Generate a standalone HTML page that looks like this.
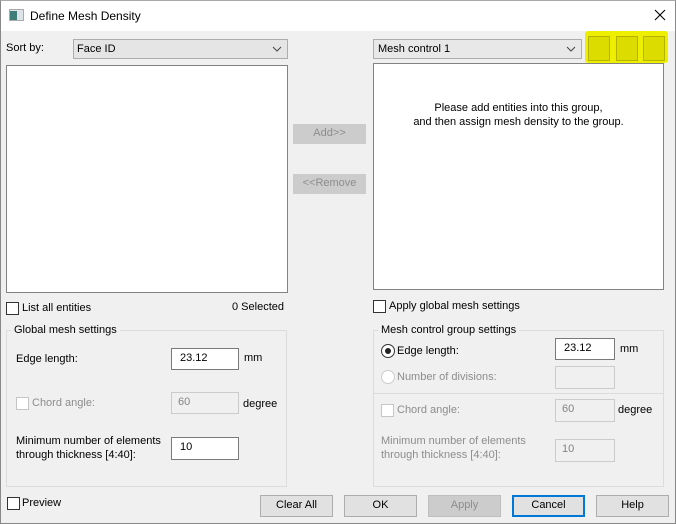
<!DOCTYPE html>
<html><head><meta charset="utf-8"><style>
*{box-sizing:border-box;margin:0;padding:0}
body{width:676px;height:524px;position:relative;background:#f0f0f0;font-family:"Liberation Sans",sans-serif;font-size:11px;color:#000;overflow:hidden}
.a{position:absolute}
.win{left:0;top:0;width:676px;height:524px;border:1px solid #888;border-top:1px solid #aaa}
.title{left:1px;top:1px;width:674px;height:30px;background:#fff}
.box{background:#fff;border:1px solid #828282}
.in{background:#fff;border:1px solid #7a7a7a;padding:3px 0 0 8px}
.dis{background:#f0f0f0;border:1px solid #cccccc;color:#838383;padding:3px 0 0 6px}
.cb{width:13px;height:13px;border:1px solid #333;background:#fff}
.cbd{width:13px;height:13px;border:1px solid #c6c6c6;background:#fff}
.btn{background:#e1e1e1;border:1px solid #adadad;text-align:center;line-height:19px}
.btnd{background:#cccccc;color:#8d8d8d;text-align:center;line-height:19px}
.grp{border:1px solid #dcdcdc}
.lbl{background:#f0f0f0;padding:0 3px}
.g{color:#8d8d8d}
.ys{width:22px;height:25px;background:#dcdc00;border:1px solid #b4b400}
</style></head><body>
<div class="a win"></div>
<div class="a title"></div>
<div class="a" style="left:9px;top:9px;width:15px;height:12px;background:#dde3e6;border:1px solid #aaa"></div>
<div class="a" style="left:10px;top:11px;width:7px;height:9px;background:#3f7d78"></div>
<div class="a" style="left:30px;top:9px;font-size:12px">Define Mesh Density</div>
<svg class="a" style="left:654px;top:9px" width="12" height="12"><path d="M1 1 L11 11 M11 1 L1 11" stroke="#000" stroke-width="1.1"/></svg>

<div class="a" style="left:6px;top:42px">Sort by:</div>
<div class="a" style="left:73px;top:39px;width:215px;height:20px;background:#e5e5e5;border:1px solid #adadad;padding:3px 0 0 3px">Face ID</div>
<svg class="a" style="left:272px;top:45px" width="10" height="8"><path d="M1 2 L5 6 L9 2" fill="none" stroke="#444" stroke-width="1"/></svg>
<div class="a box" style="left:6px;top:65px;width:282px;height:228px"></div>

<div class="a btnd" style="left:293px;top:124px;width:73px;height:20px">Add&gt;&gt;</div>
<div class="a btnd" style="left:293px;top:174px;width:73px;height:20px">&lt;&lt;Remove</div>

<div class="a" style="left:373px;top:39px;width:209px;height:20px;background:#e8e8e8;border:1px solid #adadad;padding:3px 0 0 4px">Mesh control 1</div>
<svg class="a" style="left:566px;top:45px" width="10" height="8"><path d="M1 2 L5 6 L9 2" fill="none" stroke="#444" stroke-width="1"/></svg>
<div class="a" style="left:585px;top:31px;width:83px;height:32px;background:#eeee00;border-radius:3px"></div>
<div class="a ys" style="left:588px;top:36px"></div>
<div class="a ys" style="left:616px;top:36px"></div>
<div class="a ys" style="left:643px;top:36px"></div>
<div class="a box" style="left:373px;top:63px;width:291px;height:227px"></div>
<div class="a" style="left:373px;top:101px;width:291px;text-align:center;line-height:14px">Please add entities into this group,<br>and then assign mesh density to the group.</div>

<div class="a cb" style="left:6px;top:302px"></div>
<div class="a" style="left:22px;top:302px">List all entities</div>
<div class="a" style="left:232px;top:301px">0 Selected</div>

<div class="a grp" style="left:6px;top:330px;width:281px;height:157px"></div>
<div class="a lbl" style="left:11px;top:324px">Global mesh settings</div>
<div class="a" style="left:16px;top:353px">Edge length:</div>
<div class="a in" style="left:171px;top:348px;width:68px;height:22px">23.12</div>
<div class="a" style="left:244px;top:352px">mm</div>
<div class="a cbd" style="left:16px;top:397px"></div>
<div class="a g" style="left:32px;top:397px">Chord angle:</div>
<div class="a dis" style="left:171px;top:392px;width:68px;height:22px">60</div>
<div class="a" style="left:243px;top:398px">degree</div>
<div class="a" style="left:16px;top:434px;line-height:14px">Minimum number of elements<br>through thickness [4:40]:</div>
<div class="a in" style="left:171px;top:437px;width:68px;height:23px">10</div>

<div class="a cb" style="left:7px;top:497px"></div>
<div class="a" style="left:22px;top:497px">Preview</div>

<div class="a cb" style="left:373px;top:300px"></div>
<div class="a" style="left:389px;top:300px">Apply global mesh settings</div>
<div class="a grp" style="left:373px;top:330px;width:291px;height:157px"></div>
<div class="a" style="left:374px;top:393px;width:289px;height:1px;background:#dcdcdc"></div>
<div class="a lbl" style="left:378px;top:324px">Mesh control group settings</div>
<div class="a" style="left:381px;top:344px;width:14px;height:14px;border:1px solid #333;border-radius:50%;background:#fff"></div>
<div class="a" style="left:385px;top:348px;width:6px;height:6px;border-radius:50%;background:#222"></div>
<div class="a" style="left:397px;top:345px">Edge length:</div>
<div class="a in" style="left:555px;top:338px;width:60px;height:22px">23.12</div>
<div class="a" style="left:620px;top:343px">mm</div>
<div class="a" style="left:381px;top:370px;width:14px;height:14px;border:1px solid #ccc;border-radius:50%;background:#fff"></div>
<div class="a g" style="left:397px;top:371px">Number of divisions:</div>
<div class="a dis" style="left:555px;top:366px;width:60px;height:23px"></div>
<div class="a cbd" style="left:381px;top:404px"></div>
<div class="a g" style="left:397px;top:404px">Chord angle:</div>
<div class="a dis" style="left:555px;top:399px;width:60px;height:23px">60</div>
<div class="a" style="left:618px;top:404px">degree</div>
<div class="a g" style="left:381px;top:434px;line-height:14px">Minimum number of elements<br>through thickness [4:40]:</div>
<div class="a dis" style="left:555px;top:439px;width:60px;height:23px">10</div>

<div class="a btn" style="left:260px;top:495px;width:73px;height:22px">Clear All</div>
<div class="a btn" style="left:344px;top:495px;width:73px;height:22px">OK</div>
<div class="a btnd" style="left:428px;top:495px;width:73px;height:22px;border:1px solid #bfbfbf">Apply</div>
<div class="a btn" style="left:512px;top:495px;width:73px;height:22px;border:2px solid #0078d7;line-height:17px">Cancel</div>
<div class="a btn" style="left:596px;top:495px;width:73px;height:22px">Help</div>
</body></html>
